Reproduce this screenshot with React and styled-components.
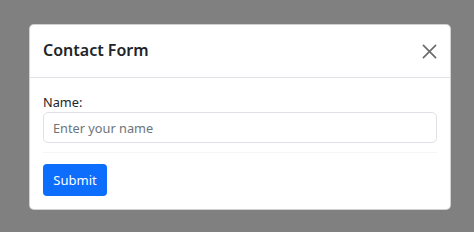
import React from "react";
import styled, { createGlobalStyle } from "styled-components";

const Global = createGlobalStyle`
  html, body { margin: 0; padding: 0; background: #808080; }
  body { font-family: "Noto Sans", "Open Sans", sans-serif; color: #212529; }
  * { box-sizing: border-box; }
`;

const Backdrop = styled.div`
  width: 474px;
  height: 232px;
  padding: 24px 0 0 29px;
  background: #808080;
`;

const Dialog = styled.div`
  width: 422px;
  background: #fff;
  border: 1px solid rgba(0, 0, 0, 0.18);
  border-radius: 5px;
  display: flex;
  flex-direction: column;
`;

const Header = styled.div`
  height: 53px;
  padding: 0 13px 0 13px;
  display: flex;
  align-items: center;
  justify-content: space-between;
  border-bottom: 1px solid #dee2e6;
`;

const Title = styled.h5`
  margin: 0;
  font-size: 16px;
  font-weight: 600;
  line-height: 1.2;
  color: #212529;
`;

const Close = styled.button`
  width: 16px;
  height: 16px;
  padding: 0;
  border: 0;
  background: transparent;
  display: flex;
  align-items: center;
  justify-content: center;
  cursor: pointer;
`;

const Body = styled.form`
  padding: 14px 13px 13px 13px;
  display: flex;
  flex-direction: column;
  align-items: flex-start;
`;

const Field = styled.div`
  width: 100%;
  padding-bottom: 9px;
  border-bottom: 1px solid #f6f6f6;
  margin-bottom: 11px;
`;

const Label = styled.label`
  display: block;
  font-size: 12.75px;
  line-height: 20px;
  color: #212529;
`;

const Input = styled.input`
  display: block;
  width: 100%;
  height: 31px;
  padding: 0 9px;
  border: 1px solid #dee2e6;
  border-radius: 5px;
  font-family: inherit;
  font-size: 12.75px;
  color: #212529;
  outline: none;
  &::placeholder { color: #6c757d; }
`;

const Button = styled.button`
  width: 64px;
  height: 32px;
  padding: 0;
  border: 0;
  border-radius: 4px;
  background: #0d6efd;
  color: #fff;
  font-family: inherit;
  font-size: 13px;
  cursor: pointer;
`;

export default function App() {
  return (
    <>
      <Global />
      <Backdrop>
        <Dialog>
          <Header>
            <Title>Contact Form</Title>
            <Close aria-label="Close">
              <svg width="15" height="15" viewBox="0 0 16 16">
                <path d="M1.5 1.5 L14.5 14.5 M14.5 1.5 L1.5 14.5" stroke="#6b6b6b" strokeWidth="1.8" strokeLinecap="round" />
              </svg>
            </Close>
          </Header>
          <Body onSubmit={(e) => e.preventDefault()}>
            <Field>
              <Label htmlFor="name">Name:</Label>
              <Input id="name" placeholder="Enter your name" />
            </Field>
            <Button type="submit">Submit</Button>
          </Body>
        </Dialog>
      </Backdrop>
    </>
  );
}
